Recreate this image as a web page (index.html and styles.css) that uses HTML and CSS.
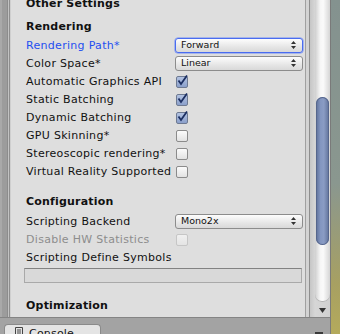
FILE: index.html
```html
<!DOCTYPE html>
<html lang="en">
<head>
    <meta charset="UTF-8">
    <meta name="viewport" content="width=device-width, initial-scale=1.0">
    <title>Player Settings</title>
    <link rel="stylesheet" href="styles.css">
</head>
<body>
    <div class="screen">
        <div class="window">
            <div class="main">
                <div class="frame-left"></div>
                <div class="inspector">
                    <div class="section-title">Other Settings</div>
                    <div class="group-title rendering">Rendering</div>

                    <div class="row">
                        <span class="label focus">Rendering Path*</span>
                        <div class="popup focused">Forward
                            <svg class="arrows" width="5" height="8" viewBox="0 0 5 8"><path d="M0 3 L2.5 0 L5 3 Z M0 5 L2.5 8 L5 5 Z" fill="#333"/></svg>
                        </div>
                    </div>
                    <div class="row">
                        <span class="label">Color Space*</span>
                        <div class="popup">Linear
                            <svg class="arrows" width="5" height="8" viewBox="0 0 5 8"><path d="M0 3 L2.5 0 L5 3 Z M0 5 L2.5 8 L5 5 Z" fill="#333"/></svg>
                        </div>
                    </div>
                    <div class="row">
                        <span class="label">Automatic Graphics API</span>
                        <span class="checkbox checked"><svg width="12" height="12" viewBox="0 0 12 12"><path d="M2.5 5.5 L5 9 L11 0.5" fill="none" stroke="#1c2f62" stroke-width="1.8"/></svg></span>
                    </div>
                    <div class="row">
                        <span class="label">Static Batching</span>
                        <span class="checkbox checked"><svg width="12" height="12" viewBox="0 0 12 12"><path d="M2.5 5.5 L5 9 L11 0.5" fill="none" stroke="#1c2f62" stroke-width="1.8"/></svg></span>
                    </div>
                    <div class="row">
                        <span class="label">Dynamic Batching</span>
                        <span class="checkbox checked"><svg width="12" height="12" viewBox="0 0 12 12"><path d="M2.5 5.5 L5 9 L11 0.5" fill="none" stroke="#1c2f62" stroke-width="1.8"/></svg></span>
                    </div>
                    <div class="row">
                        <span class="label">GPU Skinning*</span>
                        <span class="checkbox"></span>
                    </div>
                    <div class="row">
                        <span class="label">Stereoscopic rendering*</span>
                        <span class="checkbox"></span>
                    </div>
                    <div class="row">
                        <span class="label">Virtual Reality Supported</span>
                        <span class="checkbox"></span>
                    </div>

                    <div class="group-title configuration">Configuration</div>
                    <div class="row">
                        <span class="label">Scripting Backend</span>
                        <div class="popup">Mono2x
                            <svg class="arrows" width="5" height="8" viewBox="0 0 5 8"><path d="M0 3 L2.5 0 L5 3 Z M0 5 L2.5 8 L5 5 Z" fill="#333"/></svg>
                        </div>
                    </div>
                    <div class="row">
                        <span class="label disabled">Disable HW Statistics</span>
                        <span class="checkbox disabled"></span>
                    </div>
                    <div class="row">
                        <span class="label">Scripting Define Symbols</span>
                    </div>
                    <div class="text-field"></div>

                    <div class="group-title optimization">Optimization</div>
                </div>
                <div class="gutter"></div>
                <div class="scrollbar">
                    <div class="track"><div class="thumb"></div></div>
                    <div class="scroll-down">
                        <svg width="7" height="5" viewBox="0 0 7 5"><path d="M0 0 L7 0 L3.5 5 Z" fill="#333"/></svg>
                    </div>
                </div>
            </div>
            <div class="statusbar">
                <div class="tab">
                    <svg class="tab-icon" width="8" height="10" viewBox="0 0 8 10"><path d="M0.5 0.5 H7.5 V10 M0.5 0.5 V10 M2 3 H6 M2 5 H6 M2 7 H6" fill="none" stroke="#444" stroke-width="1"/></svg>
                    <span>Console</span>
                </div>
                <span class="status-mark"></span>
            </div>
        </div>
        <div class="desktop"></div>
    </div>
</body>
</html>
```

FILE: styles.css
```css
body {
    margin: 0;
    font-family: "DejaVu Sans", Verdana, sans-serif;
    font-size: 11px;
    color: #111;
    overflow: hidden;
}
.screen {
    display: flex;
    width: 340px;
    height: 334px;
    overflow: hidden;
}
.window {
    width: 330px;
    display: flex;
    flex-direction: column;
    border-right: 1px solid #7a7a7a;
    background-color: #a3a3a3;
}
.desktop {
    flex: 1;
    background: linear-gradient(to bottom, #84928f 0%, #8a978f 55%, #a7a062 85%, #b4aa5c 100%);
}
.main {
    display: flex;
    height: 318px;
    border-bottom: 1px solid #848484;
    box-sizing: border-box;
}
.frame-left {
    width: 11px;
    flex-shrink: 0;
    background: linear-gradient(to right, #a9a9a9 0 2px, #9c9c9c 2px 7px, #8c8c8c 7px 8px, #c2c2c2 8px 9px, #8e8e8e 9px 10px, #cfcfcf 10px 11px);
}
.inspector {
    width: 295px;
    flex-shrink: 0;
    box-sizing: border-box;
    padding-left: 15px;
    background-color: #dedede;
    border-right: 1px solid #a0a0a0;
    overflow: hidden;
    letter-spacing: 0.3px;
}
.section-title,
.group-title {
    height: 18px;
    line-height: 18px;
    font-weight: bold;
    letter-spacing: 0.2px;
}
.section-title {
    margin-top: -5px;
}
.rendering {
    margin-top: 5px;
    margin-bottom: 1px;
}
.configuration {
    margin-top: 12px;
    margin-bottom: 2px;
}
.optimization {
    margin-top: 14px;
}
.row {
    display: flex;
    align-items: flex-start;
    height: 18px;
    line-height: 18px;
}
.label {
    width: 149px;
    flex-shrink: 0;
    white-space: nowrap;
}
.label.focus {
    color: #1f4ff0;
}
.label.disabled {
    color: #8d8d8d;
}
.popup {
    position: relative;
    box-sizing: border-box;
    width: 128px;
    height: 15px;
    margin-top: 1px;
    padding-left: 5px;
    font-size: 9.5px;
    line-height: 12px;
    letter-spacing: 0;
    border: 1px solid #8c8c8c;
    border-radius: 3px;
    background: linear-gradient(to bottom, #fdfdfd, #e6e6e6 60%, #d9d9d9);
}
.popup.focused {
    border-color: #4a6cf0;
    box-shadow: 0 0 0 0.5px #6f8cf5;
}
.arrows {
    position: absolute;
    right: 6px;
    top: 2px;
}
.checkbox {
    box-sizing: border-box;
    width: 12px;
    height: 12px;
    margin-top: 3px;
    margin-left: 1px;
    border: 1px solid #8b8b8b;
    border-radius: 2px;
    background: linear-gradient(to bottom, #fbfbfb, #e2e2e2);
    position: relative;
}
.checkbox svg {
    position: absolute;
    left: -1px;
    top: -2px;
}
.checkbox.checked {
    border-color: #6e7a92;
    background: linear-gradient(to bottom, #b3c3e2, #8ba0cb);
}
.checkbox.disabled {
    border-color: #c6c6c6;
    background: linear-gradient(to bottom, #f0f0f0, #e4e4e4);
}
.text-field {
    box-sizing: border-box;
    width: 278px;
    height: 15px;
    margin-top: 1px;
    margin-left: -2px;
    background-color: #d9d9d9;
    border: 1px solid #a9a9a9;
    border-top-color: #828282;
}
.gutter {
    width: 3px;
    flex-shrink: 0;
    background-color: #d3d3d3;
    border-right: 1px solid #8e8e8e;
}
.scrollbar {
    width: 20px;
    display: flex;
    flex-direction: column;
    background: linear-gradient(to right, #c6c6c6, #d6d6d6 25%, #d0d0d0);
}
.track {
    height: 302px;
    margin-left: 5px;
    width: 15px;
    box-sizing: border-box;
    padding: 97px 1px 0 1px;
    border-radius: 0 0 7px 7px;
    background: linear-gradient(to right, #cfcfcf, #f6f6f6 35%, #fafafa 55%, #d5d5d5);
    box-shadow: inset 0 -1px 0 #b4b4b4;
}
.thumb {
    height: 148px;
    border-radius: 7px;
    background: linear-gradient(to right, #5d6f98, #8396c0 35%, #8a9cc4 60%, #5f7199);
    box-shadow: inset 0 0 0 1px #56668c;
}
.scroll-down {
    flex: 1;
    display: flex;
    justify-content: center;
    padding-left: 4px;
    padding-top: 6px;
}
.statusbar {
    flex: 1;
    display: flex;
    align-items: flex-end;
    padding-left: 4px;
    padding-right: 4px;
}
.tab {
    width: 97px;
    height: 10px;
    box-sizing: border-box;
    display: flex;
    align-items: flex-start;
    padding: 2px 0 0 10px;
    gap: 6px;
    background-color: #e4e4e4;
    border: 1px solid #8a8a8a;
    border-bottom: none;
    border-radius: 4px 4px 0 0;
    overflow: hidden;
    line-height: 11px;
    letter-spacing: 0.2px;
}
.tab-icon {
    flex-shrink: 0;
}
.tab span {
    margin-top: 1px;
}
.status-mark {
    margin-left: auto;
    margin-right: 3px;
    width: 8px;
    height: 2px;
    background-color: #3a3a3a;
}
```
